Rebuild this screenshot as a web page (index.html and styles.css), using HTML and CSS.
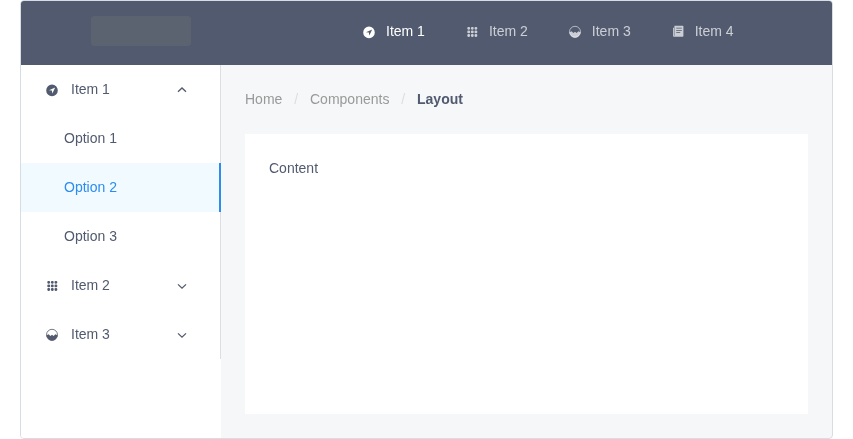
FILE: index.html
```html
<!DOCTYPE html>
<html lang="en">
<head>
<meta charset="utf-8">
<title>Layout</title>
<link rel="stylesheet" href="styles.css">
</head>
<body>
<svg class="defs" width="0" height="0" aria-hidden="true">
  <symbol id="i-nav" viewBox="0 0 16 16">
    <path fill="currentColor" fill-rule="evenodd" d="M7 2.6a5.8 5.8 0 1 1 0 11.6a5.8 5.8 0 0 1 0-11.6ZM10.2 5.4 4 8.2l2.9.3.4 3Z"/>
  </symbol>
  <symbol id="i-grid" viewBox="0 0 16 16">
    <g fill="currentColor">
      <rect x="2.3" y="2.9" width="2.8" height="2.8" rx="1.1"/><rect x="5.9" y="2.9" width="2.8" height="2.8" rx="1.1"/><rect x="9.5" y="2.9" width="2.8" height="2.8" rx="1.1"/>
      <rect x="2.3" y="6.5" width="2.8" height="2.8" rx="1.1"/><rect x="5.9" y="6.5" width="2.8" height="2.8" rx="1.1"/><rect x="9.5" y="6.5" width="2.8" height="2.8" rx="1.1"/>
      <rect x="2.3" y="10.1" width="2.8" height="2.8" rx="1.1"/><rect x="5.9" y="10.1" width="2.8" height="2.8" rx="1.1"/><rect x="9.5" y="10.1" width="2.8" height="2.8" rx="1.1"/>
    </g>
  </symbol>
  <symbol id="i-chart" viewBox="0 0 16 16">
    <circle cx="7" cy="7.8" r="5.5" fill="none" stroke="currentColor" stroke-width=".8"/>
    <path fill="currentColor" d="M1.5 8.2 3.6 7.2 5.4 8.9 7 7.7 8.6 8.9 10.4 7.2 12.5 8.2A5.5 5.5 0 0 1 1.5 8.2Z"/>
  </symbol>
  <symbol id="i-doc" viewBox="0 0 16 16">
    <path fill="currentColor" fill-rule="evenodd" d="M3.4 1.7H11.8a.6.6 0 0 1 .6.6v9.6a.8.8 0 0 1-.8.8H3a1 1 0 0 1-1-1V3.8h.9v8h.5ZM5.2 3.8v.8h5.6v-.8ZM5.2 5.9v.8h5.6v-.8ZM5.2 8v.8h4v-.8Z"/>
  </symbol>
  <symbol id="i-down" viewBox="0 0 14 14">
    <path fill="none" stroke="currentColor" stroke-width="1.3" d="M3 5.4 7 9.2 11 5.4"/>
  </symbol>
  <symbol id="i-up" viewBox="0 0 14 14">
    <path fill="none" stroke="currentColor" stroke-width="1.3" d="M3 8.8 7 5 11 8.8"/>
  </symbol>
</svg>
<div class="layout">
  <header class="topbar">
    <div class="logo"></div>
    <nav class="topnav">
      <a class="topitem is-active"><svg class="icon"><use href="#i-nav"/></svg>Item 1</a>
      <a class="topitem"><svg class="icon"><use href="#i-grid"/></svg>Item 2</a>
      <a class="topitem"><svg class="icon"><use href="#i-chart"/></svg>Item 3</a>
      <a class="topitem"><svg class="icon"><use href="#i-doc"/></svg>Item 4</a>
    </nav>
  </header>
  <div class="body">
    <aside class="sider">
      <ul class="menu">
        <li class="row title"><svg class="icon"><use href="#i-nav"/></svg><span class="label">Item 1</span><svg class="chev"><use href="#i-up"/></svg></li>
        <li class="row option">Option 1</li>
        <li class="row option is-active">Option 2</li>
        <li class="row option">Option 3</li>
        <li class="row title"><svg class="icon"><use href="#i-grid"/></svg><span class="label">Item 2</span><svg class="chev"><use href="#i-down"/></svg></li>
        <li class="row title"><svg class="icon"><use href="#i-chart"/></svg><span class="label">Item 3</span><svg class="chev"><use href="#i-down"/></svg></li>
      </ul>
    </aside>
    <main class="main">
      <div class="crumbs">
        <span class="crumb">Home</span><span class="sep">/</span><span class="crumb">Components</span><span class="sep">/</span><span class="crumb current">Layout</span>
      </div>
      <section class="card">Content</section>
    </main>
  </div>
</div>
</body>
</html>
```
FILE: styles.css
```css
* { box-sizing: border-box; }
html, body { height: 100%; }
body {
  margin: 0;
  padding: 0 20px;
  background: #fff;
  font-family: "Liberation Sans", Arial, sans-serif;
  font-size: 14px;
  line-height: 21px;
  color: #515a6e;
}
.defs { position: absolute; }
.layout {
  height: 439px;
  display: flex;
  flex-direction: column;
  border: 1px solid #d7dde4;
  border-radius: 4px;
  overflow: hidden;
  background: #f5f7f9;
  will-change: transform;
}
.topbar {
  flex: 0 0 64px;
  display: flex;
  align-items: center;
  padding: 0 0 4px 70px;
  background: #515a6e;
}
.logo {
  width: 100px;
  height: 30px;
  border-radius: 3px;
  background: #5b6270;
}
.topnav {
  display: flex;
  margin-left: 151px;
}
.topitem {
  display: flex;
  align-items: center;
  height: 60px;
  padding: 0 20px;
  color: rgba(255, 255, 255, .7);
}
.topitem.is-active { color: #fff; }
.icon {
  flex: none;
  width: 16px;
  height: 16px;
  margin-right: 8px;
  margin-top: 2px;
}
.body {
  flex: 1;
  display: flex;
  min-height: 0;
}
.sider {
  flex: 0 0 200px;
  background: #fff;
}
.menu {
  margin: 0;
  padding: 0;
  list-style: none;
  border-right: 1px solid #dcdee2;
}
.row {
  display: flex;
  align-items: center;
  height: 49px;
}
.title { padding: 0 24px; }
.title .icon {
  margin-right: 10px;
  margin-top: 1px;
}
.label { flex: 1; }
.chev {
  flex: none;
  width: 14px;
  height: 14px;
  margin-right: 7px;
  margin-top: 1px;
}
.option { padding-left: 43px; }
.option.is-active {
  margin-right: -1px;
  border-right: 2px solid #2d8cf0;
  background: #f0faff;
  color: #2d8cf0;
}
.main {
  flex: 1;
  min-width: 0;
  display: flex;
  flex-direction: column;
  padding: 24px;
}
.crumbs {
  display: flex;
  margin-bottom: 24px;
}
.crumb { color: #999; }
.crumb.current {
  color: #515a6e;
  font-weight: 700;
}
.sep {
  margin: 0 11.89px;
  color: #dcdee2;
}
.card {
  flex: 1;
  padding: 24px;
  background: #fff;
}
```
